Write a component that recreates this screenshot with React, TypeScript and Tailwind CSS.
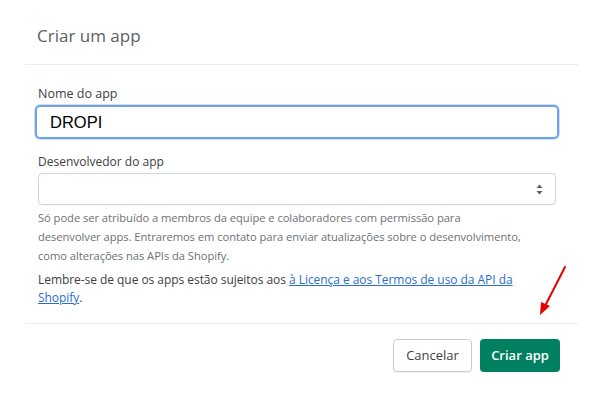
export default function App() {
  return (
    <div className="relative h-[401px] w-[603px] overflow-hidden bg-white font-['Open_Sans',sans-serif] text-[#202223]">
      <header className="flex h-[64px] items-start px-[37px] pt-[24px]">
        <h1 className="text-[17px] leading-[24px] text-[#5c5f62]">Criar um app</h1>
      </header>
      <div className="mx-[25px] h-px bg-[#ececec]" />

      <div className="pl-[38px] pr-[47px] pt-[20px]">
        <label className="block text-[12.5px] leading-[17px] text-[#3d3f41]">Nome do app</label>
        <div className="mt-[3px] -mx-[3px] flex h-[34px] items-center rounded-[5px] border-2 border-[#6fa0e8] px-[13px] shadow-[0_0_0_1px_#cfe0f8]">
          <span className="font-['Liberation_Sans',Arial,sans-serif] text-[16.5px] text-black">DROPI</span>
        </div>

        <label className="mt-[14px] block text-[12px] leading-[17px] text-[#3d3f41]">Desenvolvedor do app</label>
        <div className="mt-[3px] flex h-[32px] items-center justify-end rounded-[4px] border border-[#d2d5d8] pr-[12px] shadow-[0_1px_0_rgba(0,0,0,0.04)]">
          <svg width="7" height="11" viewBox="0 0 7 11" fill="#5c5f62">
            <polygon points="3.5,0.5 6.5,4 0.5,4" />
            <polygon points="0.5,7 6.5,7 3.5,10.5" />
          </svg>
        </div>

        <p className="mt-[3px] whitespace-nowrap text-[11.2px] leading-[19px] tracking-[-0.05px] text-[#6d7175]">
          Só pode ser atribuído a membros da equipe e colaboradores com permissão para
          <br />
          desenvolver apps. Entraremos em contato para enviar atualizações sobre o desenvolvimento,
          <br />
          como alterações nas APIs da Shopify.
        </p>

        <p className="mt-[6px] text-[12px] leading-[18px] tracking-[-0.05px] text-[#3d3f41]">
          Lembre-se de que os apps estão sujeitos aos{" "}
          <a className="text-[#2c6ecb] underline">à Licença e aos Termos de uso da API da</a>
          <br />
          <a className="text-[#2c6ecb] underline">Shopify</a>.
        </p>
      </div>

      <div className="mx-[25px] mt-[16px] h-px bg-[#ececec]" />

      <footer className="flex justify-end gap-[8px] pr-[43px] pt-[15px]">
        <button className="h-[33px] w-[79px] rounded-[4px] border border-[#c9cccf] bg-white text-[13px] text-[#3d3f41] shadow-[0_1px_0_rgba(0,0,0,0.05)]">
          Cancelar
        </button>
        <button className="h-[33px] w-[80px] rounded-[4px] bg-[#008060] text-[13px] font-semibold text-white">
          Criar app
        </button>
      </footer>

      <svg className="absolute left-[530px] top-[262px]" width="44" height="58" viewBox="0 0 44 58">
        <line x1="35" y1="5" x2="14" y2="46" stroke="#e60000" strokeWidth="2" strokeLinecap="round" />
        <polygon points="10,53 11,40 20,44" fill="#e60000" />
      </svg>
    </div>
  );
}
